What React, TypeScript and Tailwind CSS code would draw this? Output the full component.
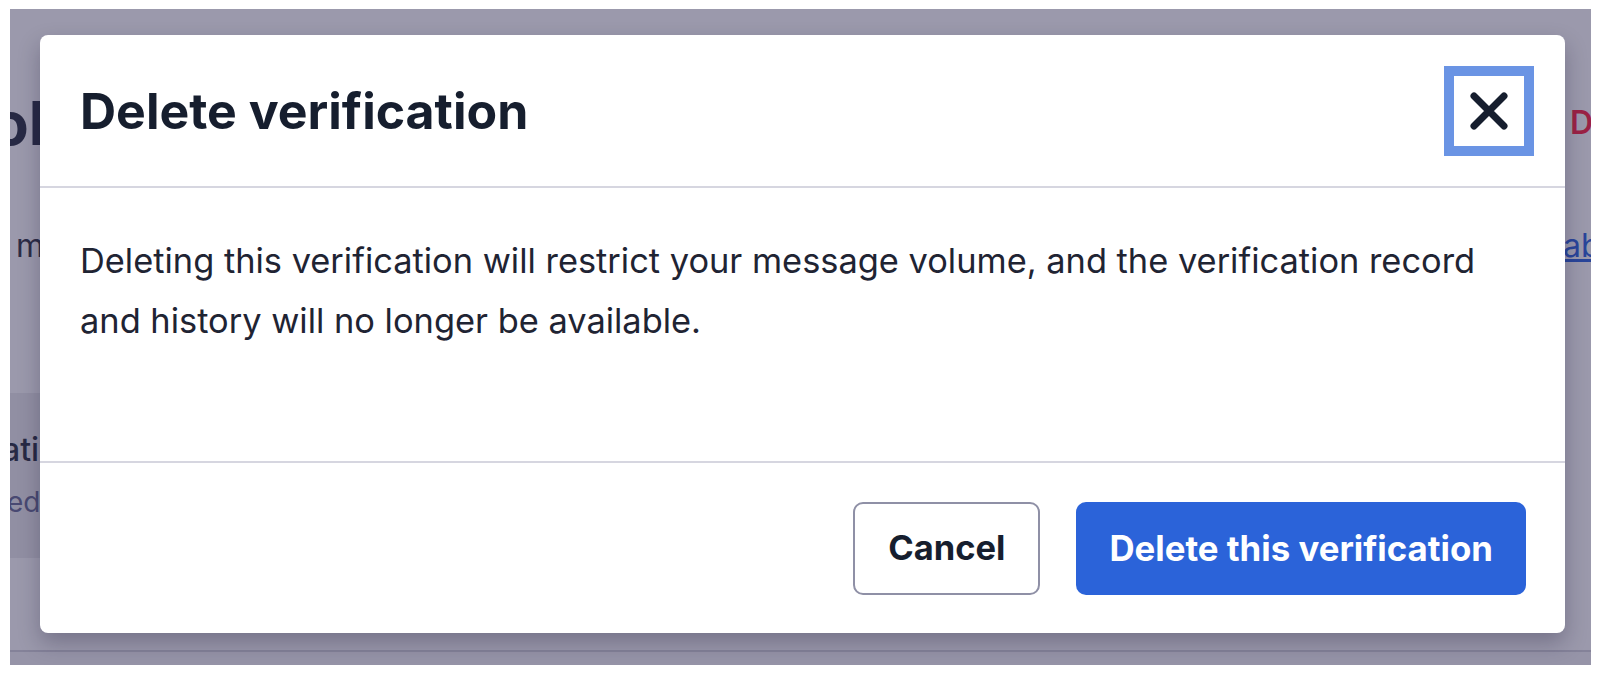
import React from "react";

const inter = { fontFamily: "Inter, 'Noto Sans', 'Liberation Sans', sans-serif" };

function CloseIcon() {
  return (
    <svg width="40" height="40" viewBox="0 0 40 40" fill="none">
      <path d="M5 5 L35 35 M35 5 L5 35" stroke="#161e2e" strokeWidth="7" strokeLinecap="round" />
    </svg>
  );
}

export default function App() {
  return (
    <div className="w-[1600px] h-[675px] bg-white pt-[9px] pl-[10px]" style={inter}>
      <div className="relative w-[1581px] h-[656px] overflow-hidden bg-white">
        {/* background page */}
        <div className="flex flex-col w-full h-full">
          <div className="flex items-center h-[72px] mt-[78px] shrink-0">
            <div className="w-[1560px] shrink-0 overflow-hidden">
              <div className="ml-[-18px] text-[60px] leading-[72px] font-bold text-[#161e2e] whitespace-nowrap">ol</div>
            </div>
            <div className="text-[32px] leading-[48px] font-semibold text-[#ff1030] whitespace-nowrap">Delete</div>
          </div>
          <div className="flex items-center h-[48px] mt-[63px] shrink-0">
            <div className="w-[1553px] shrink-0 overflow-hidden">
              <div className="ml-[6px] text-[32px] leading-[48px] text-[#1f2433] whitespace-nowrap">m</div>
            </div>
            <div className="text-[32px] leading-[48px] text-[#1a56db] underline whitespace-nowrap">able</div>
          </div>
          <div className="mt-[123px] h-[165px] w-[1540px] bg-[#ebebed] pt-[33px] shrink-0">
            <div className="ml-[-8px] text-[32px] leading-[48px] font-medium text-[#161e2e] whitespace-nowrap">ati</div>
            <div className="mt-[8px] ml-[-3px] text-[28px] leading-[40px] text-[#5a5f8a] whitespace-nowrap">ed</div>
          </div>
          <div className="mt-[92px] flex-1 border-t-2 border-[#d0d0d8] bg-[#f5f5f7]" />
        </div>

        {/* overlay */}
        <div className="absolute inset-0 bg-[#373359]/50" />

        {/* dialog */}
        <div className="absolute left-[30px] top-[26px] w-[1525px] h-[598px] bg-white rounded-[8px] flex flex-col shadow-[0_10px_22px_rgba(20,18,45,0.28)]">
          <div className="h-[153px] shrink-0 flex items-center justify-between pl-[40px] pr-[31px] border-b-2 border-[#d6d6e0]">
            <h2 className="text-[50px] leading-[58px] font-bold text-[#161e2e]">Delete verification</h2>
            <button className="w-[90px] h-[90px] border-[10px] border-[#6a94e4] flex items-center justify-center bg-white">
              <CloseIcon />
            </button>
          </div>
          <div className="flex-1 px-[40px] pt-[43px]">
            <p className="text-[34.4px] leading-[60px] text-[#1f2433]">
              Deleting this verification will restrict your message volume, and the verification record and history will no longer be available.
            </p>
          </div>
          <div className="h-[172px] shrink-0 border-t-2 border-[#d6d6e0] flex items-center justify-end gap-[36px] px-[39px]">
            <button className="h-[93px] px-[33px] rounded-[10px] border-2 border-[#8f90a6] bg-white text-[34.5px] font-bold text-[#161e2e]">
              Cancel
            </button>
            <button className="h-[93px] px-[33px] rounded-[10px] bg-[#2b63d9] text-[34.8px] font-bold text-white">
              Delete this verification
            </button>
          </div>
        </div>
      </div>
    </div>
  );
}
